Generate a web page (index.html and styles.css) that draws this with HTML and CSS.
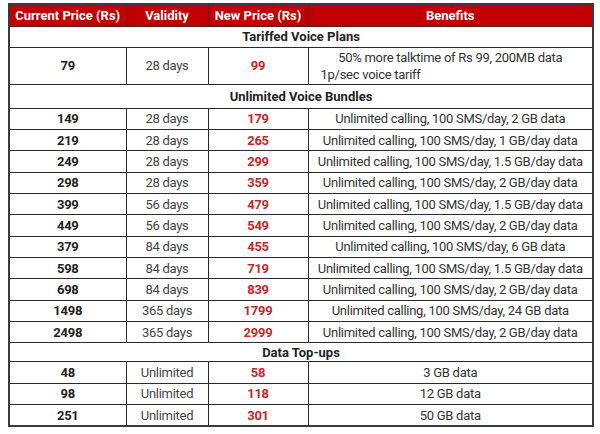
FILE: index.html
```html
<!DOCTYPE html>
<html>
<head>
<meta charset="utf-8">
<link rel="stylesheet" href="styles.css">
</head>
<body>
<table class="plans">
  <colgroup>
    <col class="c1"><col class="c2"><col class="c3"><col class="c4">
  </colgroup>
  <thead>
    <tr class="head">
      <th>Current Price (Rs)</th><th>Validity</th><th>New Price (Rs)</th><th>Benefits</th>
    </tr>
  </thead>
  <tbody>
    <tr class="section s1"><td colspan="4">Tariffed Voice Plans</td></tr>
    <tr class="tall">
      <td class="cur">79</td><td class="val">28 days</td><td class="new">99</td>
      <td class="ben"><div class="l1">50% more talktime of Rs 99, 200MB data</div><div class="l2">1p/sec voice tariff</div></td>
    </tr>
    <tr class="section s2"><td colspan="4">Unlimited Voice Bundles</td></tr>
    <tr class="row"><td class="cur">149</td><td class="val">28 days</td><td class="new">179</td><td class="ben">Unlimited calling, 100 SMS/day, 2 GB data</td></tr>
    <tr class="row"><td class="cur">219</td><td class="val">28 days</td><td class="new">265</td><td class="ben">Unlimited calling, 100 SMS/day, 1 GB/day data</td></tr>
    <tr class="row"><td class="cur">249</td><td class="val">28 days</td><td class="new">299</td><td class="ben">Unlimited calling, 100 SMS/day, 1.5 GB/day data</td></tr>
    <tr class="row"><td class="cur">298</td><td class="val">28 days</td><td class="new">359</td><td class="ben">Unlimited calling, 100 SMS/day, 2 GB/day data</td></tr>
    <tr class="row"><td class="cur">399</td><td class="val">56 days</td><td class="new">479</td><td class="ben">Unlimited calling, 100 SMS/day, 1.5 GB/day data</td></tr>
    <tr class="row"><td class="cur">449</td><td class="val">56 days</td><td class="new">549</td><td class="ben">Unlimited calling, 100 SMS/day, 2 GB/day data</td></tr>
    <tr class="row"><td class="cur">379</td><td class="val">84 days</td><td class="new">455</td><td class="ben">Unlimited calling, 100 SMS/day, 6 GB data</td></tr>
    <tr class="row"><td class="cur">598</td><td class="val">84 days</td><td class="new">719</td><td class="ben">Unlimited calling, 100 SMS/day, 1.5 GB/day data</td></tr>
    <tr class="row"><td class="cur">698</td><td class="val">84 days</td><td class="new">839</td><td class="ben">Unlimited calling, 100 SMS/day, 2 GB/day data</td></tr>
    <tr class="row"><td class="cur">1498</td><td class="val">365 days</td><td class="new">1799</td><td class="ben">Unlimited calling, 100 SMS/day, 24 GB data</td></tr>
    <tr class="row"><td class="cur">2498</td><td class="val">365 days</td><td class="new">2999</td><td class="ben">Unlimited calling, 100 SMS/day, 2 GB/day data</td></tr>
    <tr class="section s3"><td colspan="4">Data Top-ups</td></tr>
    <tr class="row"><td class="cur">48</td><td class="val">Unlimited</td><td class="new">58</td><td class="ben">3 GB data</td></tr>
    <tr class="row"><td class="cur">98</td><td class="val">Unlimited</td><td class="new">118</td><td class="ben">12 GB data</td></tr>
    <tr class="row"><td class="cur">251</td><td class="val">Unlimited</td><td class="new">301</td><td class="ben">50 GB data</td></tr>
  </tbody>
</table>
</body>
</html>
```
FILE: styles.css
```css
html, body {
  margin: 0;
  padding: 0;
  background: #ffffff;
}
body {
  padding: 3px 0 0 8px;
  font-family: Roboto, "Liberation Sans", sans-serif;
  font-size: 13px;
  color: #333;
}
.plans {
  border-collapse: collapse;
  table-layout: fixed;
  width: 584px;
  border: 2px solid #3a3a3a;
}
.c1 { width: 117px; }
.c2 { width: 82px; }
.c3 { width: 100px; }
.c4 { width: 285px; }
.plans th, .plans td {
  border: 1px solid #2a2a2a;
  padding: 0 2px;
  text-align: center;
  vertical-align: middle;
  line-height: 17px;
  white-space: nowrap;
  overflow: hidden;
}
.plans td {
  letter-spacing: -0.27px;
}
.head th {
  background: #c00000;
  color: #ffffff;
  font-weight: 700;
  height: 21px;
  border-color: #5a1a1a;
}
.section td {
  font-weight: 700;
  color: #222;
  height: 19.5px;
  letter-spacing: 0;
}
.s2 td { height: 23px; }
.s3 td { height: 18px; }
.tall td { height: 36px; }
.row td { height: 20.35px; }
.cur { font-weight: 700; color: #222; }
.val { color: #444; }
.new { font-weight: 700; color: #c62828; }
.ben { color: #333; }
.ben .l1 { text-align: center; }
.ben .l2 { text-align: left; padding-left: 10px; }
```
